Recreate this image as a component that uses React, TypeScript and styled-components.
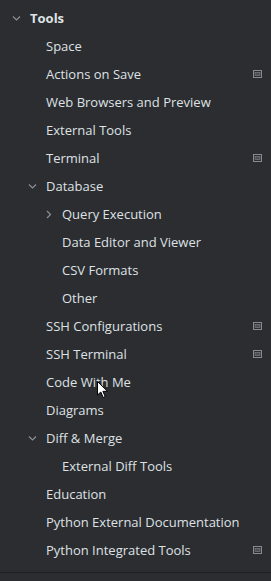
import React from 'react';
import styled, { createGlobalStyle } from 'styled-components';

// ─── Data ────────────────────────────────────────────────────────────────────

type Node = { label: string; level: number; chevron?: 'open' | 'closed'; bold?: boolean; badge?: boolean };

const nodes: Node[] = [
  { label: 'Tools', level: 0, chevron: 'open', bold: true },
  { label: 'Space', level: 1 },
  { label: 'Actions on Save', level: 1, badge: true },
  { label: 'Web Browsers and Preview', level: 1 },
  { label: 'External Tools', level: 1 },
  { label: 'Terminal', level: 1, badge: true },
  { label: 'Database', level: 1, chevron: 'open' },
  { label: 'Query Execution', level: 2, chevron: 'closed' },
  { label: 'Data Editor and Viewer', level: 2 },
  { label: 'CSV Formats', level: 2 },
  { label: 'Other', level: 2 },
  { label: 'SSH Configurations', level: 1, badge: true },
  { label: 'SSH Terminal', level: 1, badge: true },
  { label: 'Code With Me', level: 1 },
  { label: 'Diagrams', level: 1 },
  { label: 'Diff & Merge', level: 1, chevron: 'open' },
  { label: 'External Diff Tools', level: 2 },
  { label: 'Education', level: 1 },
  { label: 'Python External Documentation', level: 1 },
  { label: 'Python Integrated Tools', level: 1, badge: true },
];

// ─── Styled components ───────────────────────────────────────────────────────

const Global = createGlobalStyle`
  html, body { margin: 0; padding: 0; background: #2b2d30; }
`;

const Panel = styled.div`
  position: relative;
  width: 271px;
  height: 581px;
  background: #2b2d30;
  font-family: 'Open Sans', 'Noto Sans', sans-serif;
  font-size: 13px;
  color: #dfe1e5;
  padding-top: 4px;
  box-sizing: border-box;
  overflow: hidden;
`;

const Tree = styled.div`
  display: flex;
  flex-direction: column;
  border-bottom: 1px solid #1e1f22;
  padding-bottom: 8px;
`;

const Row = styled.div<{ $level: number }>`
  display: flex;
  align-items: center;
  height: 28px;
  padding-left: ${({ $level }) => 12 + $level * 16}px;
  padding-right: 9px;
`;

const Arrow = styled.span`
  width: 18px;
  display: flex;
  align-items: center;
  flex-shrink: 0;
  color: #8c8f94;
`;

const Label = styled.span<{ $bold?: boolean }>`
  flex: 1;
  white-space: nowrap;
  font-weight: ${({ $bold }) => ($bold ? 700 : 400)};
`;

const Pointer = styled.svg`
  position: absolute;
  left: 97px;
  top: 381px;
`;

// ─── Icons ───────────────────────────────────────────────────────────────────

const Chevron = ({ open }: { open: boolean }) => (
  <svg width="9" height="9" viewBox="0 0 9 9" fill="none" stroke="currentColor" strokeWidth="1.2">
    {open ? <path d="M1 2.5 L4.5 6 L8 2.5" /> : <path d="M3 1 L6.5 4.5 L3 8" />}
  </svg>
);

const ProjectBadge = () => (
  <svg width="9" height="8" viewBox="0 0 9 8">
    <rect x="0.5" y="0.5" width="8" height="7" fill="#2b2d30" stroke="#868a91" />
    <rect x="2" y="2.5" width="5" height="3" fill="#4a4e54" stroke="#868a91" strokeWidth="0.6" />
  </svg>
);

// ─── Component ───────────────────────────────────────────────────────────────

export default function App() {
  return (
    <>
      <Global />
      <Panel>
        <Tree>
          {nodes.map((n, i) => (
            <Row key={i} $level={n.level}>
              <Arrow>{n.chevron && <Chevron open={n.chevron === 'open'} />}</Arrow>
              <Label $bold={n.bold}>{n.label}</Label>
              {n.badge && <ProjectBadge />}
            </Row>
          ))}
        </Tree>
        <Pointer width="12" height="18" viewBox="0 0 12 18">
          <path d="M0.5 0.5 L0.5 14 L3.8 11 L6.2 16.5 L8.2 15.6 L5.9 10.3 L10.5 10.3 Z" fill="#fff" stroke="#000" strokeWidth="1" />
        </Pointer>
      </Panel>
    </>
  );
}
